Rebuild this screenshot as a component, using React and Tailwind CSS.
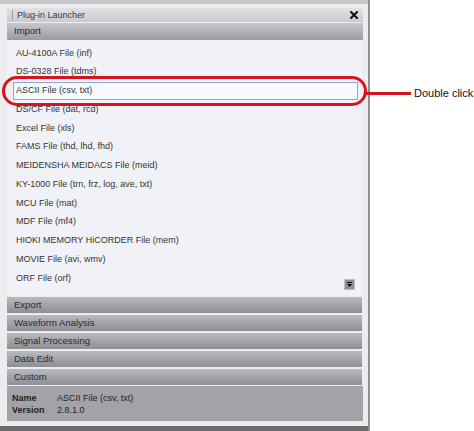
const items = [
  "AU-4100A File (inf)",
  "DS-0328 File (tdms)",
  "ASCII File (csv, txt)",
  "DS/CF File (dat, rcd)",
  "Excel File (xls)",
  "FAMS File (thd, lhd, fhd)",
  "MEIDENSHA MEIDACS File (meid)",
  "KY-1000 File (trn, frz, log, ave, txt)",
  "MCU File (mat)",
  "MDF File (mf4)",
  "HIOKI MEMORY HiCORDER File (mem)",
  "MOVIE File (avi, wmv)",
  "ORF File (orf)",
];

const sections = ["Export", "Waveform Analysis", "Signal Processing", "Data Edit", "Custom"];

function App() {
  return (
    <div className="relative w-[474px] h-[431px] bg-white overflow-hidden font-['Liberation_Sans',Arial,sans-serif] text-[#333]">
      {/* Launcher window */}
      <div className="w-[370px] h-[431px] flex flex-col bg-[#ececef] border-r-2 border-[#8e8e90]">
        <div className="h-[4px] bg-[#c8c8cb]"></div>

        <div className="flex flex-col pl-[7px] pr-[5px] pt-[4px]">
          {/* Title bar */}
          <div className="h-[14px] flex items-center bg-gradient-to-b from-[#e2e2e6] to-[#c9c9cf]">
            <div className="ml-[5px] w-px h-[10px] bg-[#9a9aa0]"></div>
            <span className="ml-[4px] text-[9px] leading-none text-[#3a3a3a]">Plug-in Launcher</span>
            <svg className="ml-auto mr-[5px]" width="8" height="8" viewBox="0 0 8 8">
              <path d="M1 1L7 7M7 1L1 7" stroke="#111" strokeWidth="2" strokeLinecap="square" />
            </svg>
          </div>

          {/* Import header */}
          <div className="mt-px h-[17px] flex items-center pl-[7px] bg-gradient-to-b from-[#c8c8ce] to-[#9a9aa2] text-[9.5px] text-[#2a2a2a]">
            Import
          </div>

          {/* Item list */}
          <div className="relative h-[256px] bg-[#f1f2f7] pt-[4px] flex flex-col">
            {items.map((item, i) => (
              <div
                key={item}
                className={`h-[18.75px] ml-[6px] mr-[5px] px-[2px] flex items-center text-[9px] border ${
                  i === 2 ? "border-[#8ea8d6] bg-[#f7f9fd]" : "border-transparent"
                }`}
              >
                {item}
              </div>
            ))}
            <div className="absolute right-[8px] bottom-[6px] w-[11px] h-[11px] bg-[#8f8f95] border border-[#bdbdc2] flex flex-col items-center justify-center">
              <div className="w-[5px] h-px bg-black"></div>
              <svg width="5" height="3" viewBox="0 0 5 3" className="mt-px">
                <path d="M0 0H5L2.5 3Z" fill="#000" />
              </svg>
            </div>
          </div>

          {/* Collapsed sections */}
          <div className="mt-px flex flex-col gap-[2px]">
            {sections.map((s) => (
              <div
                key={s}
                className="h-[16px] flex items-center pl-[7px] mr-px bg-gradient-to-b from-[#b9b9c0] to-[#8e8e96] text-[9.5px] text-[#2b2b2b]"
              >
                {s}
              </div>
            ))}
          </div>

          {/* Info panel */}
          <div className="mt-px h-[35px] bg-[#a2a2a8] pl-[5px] pt-[6px] text-[9px] leading-[12px] text-[#1e1e1e]">
            <div className="flex">
              <span className="w-[45px] font-bold">Name</span>
              <span>ASCII File (csv, txt)</span>
            </div>
            <div className="flex">
              <span className="w-[45px] font-bold">Version</span>
              <span>2.8.1.0</span>
            </div>
          </div>
        </div>

        <div className="flex-1"></div>
        <div className="h-[5px] bg-[#6c6c6e]"></div>
      </div>

      {/* Callout */}
      <div className="absolute left-[2px] top-[76px] w-[365px] h-[30px] rounded-full border-[3px] border-[#d7141c]"></div>
      <div className="absolute left-[366px] top-[92px] w-[45px] h-[3px] bg-[#d7141c]"></div>
      <div className="absolute left-[414px] top-[86px] text-[11px] leading-[14px] text-[#111] whitespace-nowrap">
        Double click
      </div>
    </div>
  );
}

export default App;
